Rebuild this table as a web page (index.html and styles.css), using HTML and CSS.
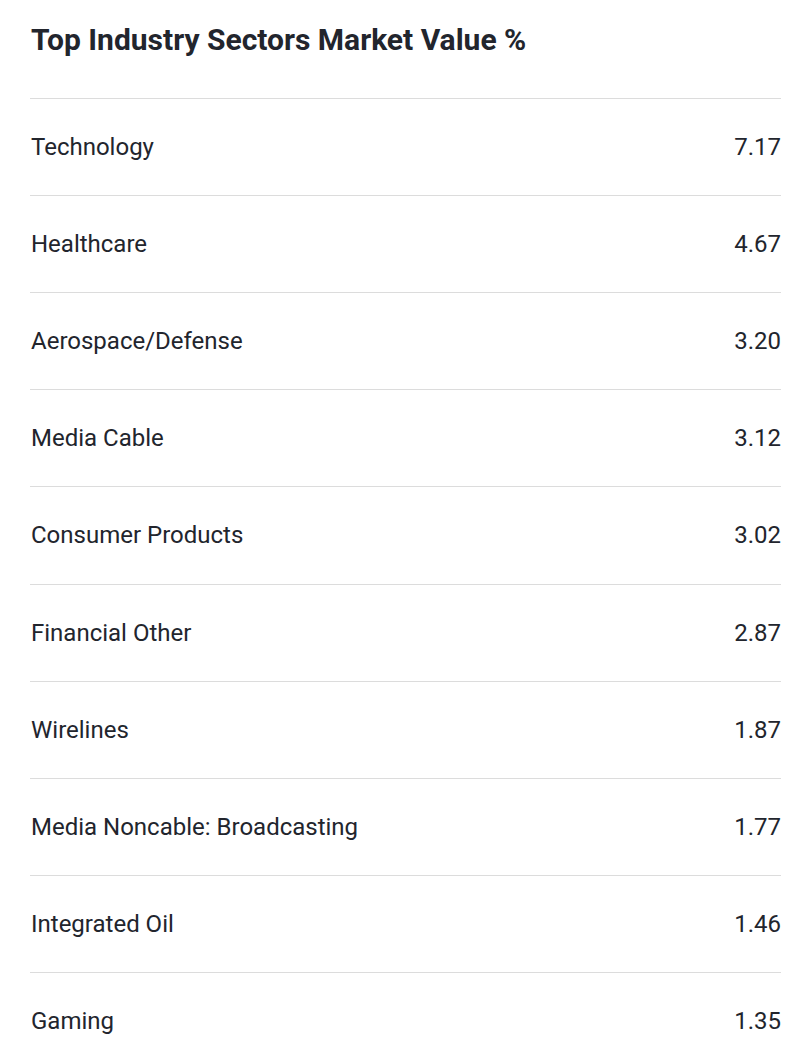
FILE: index.html
```html
<!DOCTYPE html>
<html>
<head>
<meta charset="utf-8">
<link rel="stylesheet" href="styles.css">
</head>
<body>
<div class="panel">
  <h2 class="title">Top Industry Sectors Market Value %</h2>
  <div class="list">
    <div class="row"><span class="name">Technology</span><span class="val">7.17</span></div>
    <div class="row"><span class="name">Healthcare</span><span class="val">4.67</span></div>
    <div class="row"><span class="name">Aerospace/Defense</span><span class="val">3.20</span></div>
    <div class="row"><span class="name">Media Cable</span><span class="val">3.12</span></div>
    <div class="row"><span class="name">Consumer Products</span><span class="val">3.02</span></div>
    <div class="row"><span class="name">Financial Other</span><span class="val">2.87</span></div>
    <div class="row"><span class="name">Wirelines</span><span class="val">1.87</span></div>
    <div class="row"><span class="name">Media Noncable: Broadcasting</span><span class="val">1.77</span></div>
    <div class="row"><span class="name">Integrated Oil</span><span class="val">1.46</span></div>
    <div class="row"><span class="name">Gaming</span><span class="val">1.35</span></div>
  </div>
</div>
</body>
</html>
```

FILE: styles.css
```css
html, body {
  margin: 0;
  padding: 0;
  background: #ffffff;
}
body {
  font-family: Roboto, "Liberation Sans", sans-serif;
  color: #22252d;
}
.panel {
  width: 751px;
  margin-left: 30px;
}
.title {
  margin: 0;
  height: 98px;
  box-sizing: border-box;
  padding-top: 21px;
  padding-left: 1px;
  font-size: 30px;
  line-height: 38px;
  font-weight: 700;
  color: #22252d;
}
.list {
  display: flex;
  flex-direction: column;
}
.row {
  display: flex;
  justify-content: space-between;
  align-items: center;
  height: 97.11px;
  flex: none;
  box-sizing: border-box;
  border-top: 1px solid #dcdcdc;
  padding-left: 1px;
  font-size: 24px;
}
.val {
  text-align: right;
}
```
